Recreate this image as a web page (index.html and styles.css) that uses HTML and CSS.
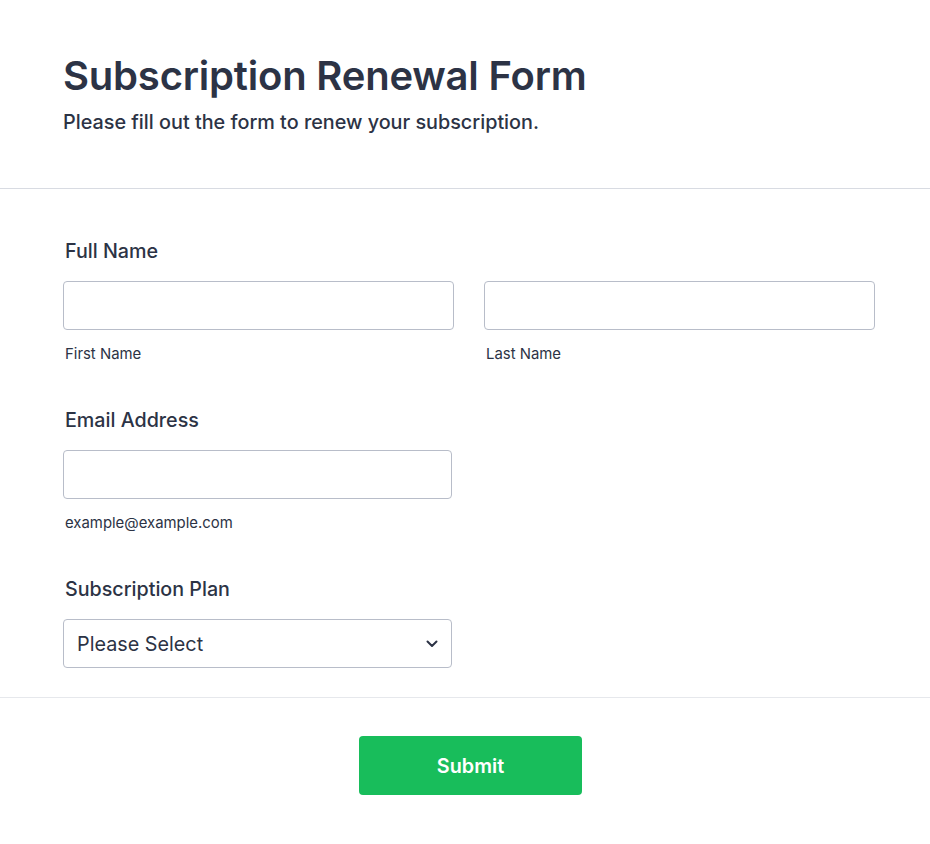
FILE: index.html
```html
<!DOCTYPE html>
<html lang="en">
<head>
<meta charset="utf-8">
<title>Subscription Renewal Form</title>
<link rel="stylesheet" href="styles.css">
</head>
<body>
<form class="form">
  <header class="form-header">
    <h1 class="title">Subscription Renewal Form</h1>
    <p class="subtitle">Please fill out the form to renew your subscription.</p>
  </header>
  <section class="fields">
    <div class="field">
      <label class="label">Full Name</label>
      <div class="name-row">
        <div class="sub-field">
          <input class="input" type="text">
          <span class="sublabel">First Name</span>
        </div>
        <div class="sub-field">
          <input class="input" type="text">
          <span class="sublabel">Last Name</span>
        </div>
      </div>
    </div>
    <div class="field">
      <label class="label">Email Address</label>
      <div class="sub-field narrow">
        <input class="input" type="email">
        <span class="sublabel">example@example.com</span>
      </div>
    </div>
    <div class="field">
      <label class="label">Subscription Plan</label>
      <div class="select narrow">
        <span class="select-text">Please Select</span>
        <svg class="chevron" width="12" height="8" viewBox="0 0 12 8"><path d="M1.5 1.5 L6 6 L10.5 1.5" fill="none" stroke="#2c3345" stroke-width="2" stroke-linecap="round" stroke-linejoin="round"/></svg>
      </div>
    </div>
  </section>
  <footer class="form-footer">
    <button type="button" class="submit">Submit</button>
  </footer>
</form>
</body>
</html>
```

FILE: styles.css
```css
* { box-sizing: border-box; }
html, body { margin: 0; padding: 0; background: #ffffff; }
body {
  font-family: Inter, "Noto Sans", sans-serif;
  color: #2c3345;
}
.form { width: 930px; }
.form-header {
  padding: 52px 63px 54px;
  border-bottom: 1px solid #d8dbe2;
}
.title {
  margin: 0;
  font-size: 40px;
  line-height: 48px;
  font-weight: 600;
  letter-spacing: -0.2px;
}
.subtitle {
  margin: 10px 0 0;
  font-size: 19.8px;
  line-height: 24px;
  font-weight: 500;
}
.fields {
  padding: 50px 54px 29px 63px;
  display: flex;
  flex-direction: column;
  gap: 45px;
  border-bottom: 1px solid #e6e8ec;
}
.field { display: flex; flex-direction: column; }
.label {
  font-size: 19.7px;
  line-height: 24px;
  font-weight: 500;
  padding-left: 2px;
  margin-bottom: 18px;
}
.name-row { display: flex; gap: 30px; }
.sub-field { display: flex; flex-direction: column; flex: 0 0 391px; }
.narrow { width: 389px; flex: none; }
.input {
  height: 49px;
  width: 100%;
  border: 1px solid #b8bdc9;
  border-radius: 4px;
  background: #fff;
  font: inherit;
}
.sublabel {
  margin-top: 15px;
  padding-left: 2px;
  font-size: 14.9px;
  line-height: 18px;
  color: #2c3345;
}
.select {
  height: 49px;
  border: 1px solid #b8bdc9;
  border-radius: 4px;
  display: flex;
  align-items: center;
  justify-content: space-between;
  padding: 0 13px 0 13px;
}
.select-text { font-size: 19.8px; line-height: 24px; }
.form-footer {
  display: flex;
  justify-content: center;
  padding: 38px 0 49px 11px;
}
.submit {
  width: 223px;
  height: 59px;
  border: none;
  border-radius: 4px;
  background: #18bd5b;
  color: #fff;
  font-family: Inter, sans-serif;
  font-size: 19.8px;
  font-weight: 600;
}
```
